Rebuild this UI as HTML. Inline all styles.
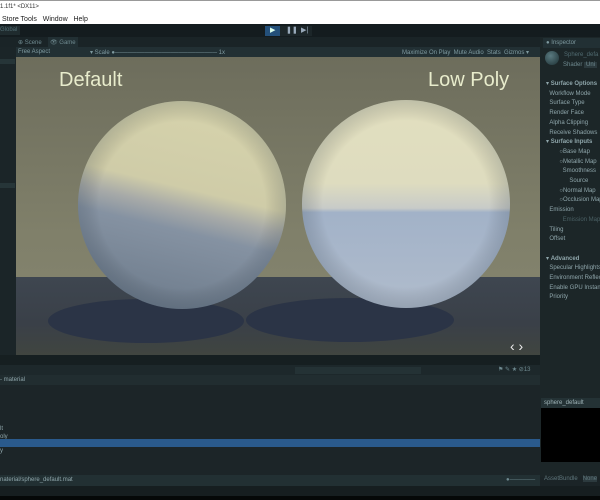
<!DOCTYPE html>
<html><head><meta charset="utf-8"><style>
*{margin:0;padding:0;box-sizing:border-box}
body{width:600px;height:500px;overflow:hidden;background:#1b2427;font-family:"Liberation Sans",sans-serif;position:relative;font-size:6px;color:#9fb0b4}
.a{position:absolute}
.t{position:absolute;white-space:nowrap}
</style></head><body>
<div class="a" style="left:0;top:0;width:600px;height:24px;background:#fff"></div>
<div class="a" style="left:0;top:0;width:600px;height:1px;background:#999"></div>
<div class="t" style="left:0;top:4px;color:#333;font-size:6px">1.1f1* &lt;DX11&gt;</div>
<div class="t" style="left:2px;top:16px;color:#222;font-size:7px">Store Tools&nbsp;&nbsp; Window&nbsp;&nbsp; Help</div>
<div class="a" style="left:0;top:24px;width:600px;height:13px;background:#141c1f"></div>
<div class="a" style="left:0;top:26px;width:20px;height:9px;background:#1f2b2e"></div>
<div class="t" style="left:0;top:27px;color:#4f6a70">Global</div>
<div class="a" style="left:265px;top:26px;width:15px;height:10px;background:#24507a"></div>
<div class="a" style="left:280px;top:26px;width:32px;height:10px;background:#1c2629"></div>
<div class="t" style="left:270px;top:26px;color:#dfe;font-size:7px">▶</div>
<div class="t" style="left:286px;top:26px;color:#9ab;font-size:7px">❚❚</div>
<div class="t" style="left:301px;top:26px;color:#9ab;font-size:7px">▶|</div>
<div class="a" style="left:0;top:37px;width:540px;height:10px;background:#1a2427"></div>
<div class="t" style="left:18px;top:39px;color:#6f8a90">⊕ Scene</div>
<div class="a" style="left:48px;top:37px;width:30px;height:10px;background:#223034"></div>
<div class="t" style="left:50px;top:39px;color:#6f8a90">👁 Game</div>
<div class="a" style="left:16px;top:47px;width:524px;height:10px;background:#223034"></div>
<div class="t" style="left:18px;top:49px;color:#7f9aa0">Free Aspect</div>
<div class="t" style="left:90px;top:49px;color:#7f9aa0">▾ Scale ●──────────────────────── 1x</div>
<div class="t" style="left:402px;top:49px;color:#7f9aa0">Maximize On Play&nbsp; Mute Audio&nbsp; Stats&nbsp; Gizmos ▾</div>
<div class="a" style="left:0;top:47px;width:16px;height:308px;background:#1b2528"></div>
<div class="a" style="left:0;top:59px;width:15px;height:5px;background:#263538"></div>
<div class="a" style="left:0;top:183px;width:15px;height:5px;background:#263538"></div>
<div class="a" style="left:16px;top:57px;width:524px;height:298px;overflow:hidden;background:linear-gradient(#6d6d5c,#80806a 60%,#858570)">
<div class="a" style="left:0;top:220px;width:524px;height:78px;background:linear-gradient(#3e4650,#3a4048 60%,#404540)"></div>
<svg class="a" style="left:0;top:0" width="524" height="298">
<defs>
<linearGradient id="g1" x1="0.62" y1="0" x2="0.38" y2="1"><stop offset="0" stop-color="#d6d3ac"/><stop offset="0.42" stop-color="#cfcca8"/><stop offset="0.52" stop-color="#a7aaa8"/><stop offset="0.62" stop-color="#8592a2"/><stop offset="1" stop-color="#6e7c8c"/></linearGradient>
<radialGradient id="e1" cx="0.5" cy="0.5" r="0.5"><stop offset="0.8" stop-color="#000" stop-opacity="0"/><stop offset="1" stop-color="#203040" stop-opacity="0.18"/></radialGradient>
<linearGradient id="g2" x1="0" y1="0" x2="0" y2="1"><stop offset="0" stop-color="#e2dfbf"/><stop offset="0.4" stop-color="#dedcbf"/><stop offset="0.52" stop-color="#c8cbc8"/><stop offset="0.54" stop-color="#a2b2c8"/><stop offset="1" stop-color="#b0bccc"/></linearGradient>
</defs>
<ellipse cx="130" cy="264" rx="98" ry="22" fill="#2b3446"/>
<ellipse cx="334" cy="263" rx="104" ry="22" fill="#2b3446"/>
<circle cx="166" cy="148" r="104" fill="url(#g1)"/>
<circle cx="166" cy="148" r="104" fill="url(#e1)"/>
<circle cx="390" cy="147" r="104" fill="url(#g2)"/>
<circle cx="390" cy="147" r="104" fill="url(#e1)"/>
<text x="43" y="29" font-family="Liberation Sans" font-size="20" fill="#e8eccc">Default</text>
<text x="412" y="29" font-family="Liberation Sans" font-size="20" fill="#e8eccc">Low Poly</text>
<text x="494" y="294" font-family="Liberation Sans" font-size="14" fill="#eee">‹ ›</text>
</svg>
</div>
<div class="a" style="left:540px;top:37px;width:60px;height:440px;background:#1c2628"></div>
<div class="a" style="left:543px;top:38px;width:57px;height:10px;background:#223034"></div>
<div class="t" style="left:546px;top:40px;color:#7f9aa0">● Inspector</div>
<div class="a" style="left:545px;top:51px;width:14px;height:14px;border-radius:50%;background:radial-gradient(circle at 40% 35%,#5a7a80,#1d3034)"></div>
<div class="t" style="left:564px;top:52px;color:#506a70">Sphere_defa</div>
<div class="t" style="left:563px;top:62px;color:#6f8a90">Shader <span style="background:#2c3a3e;padding:0 2px">Uni</span></div>
<div class="t" style="left:546px;top:80px;color:#8fa6ab;line-height:9.7px">▾ <b>Surface Options</b><br>&nbsp;&nbsp;Workflow Mode<br>&nbsp;&nbsp;Surface Type<br>&nbsp;&nbsp;Render Face<br>&nbsp;&nbsp;Alpha Clipping<br>&nbsp;&nbsp;Receive Shadows<br>▾ <b>Surface Inputs</b><br>&nbsp;&nbsp;&nbsp;&nbsp;&nbsp;&nbsp;&nbsp;&nbsp;○Base Map<br>&nbsp;&nbsp;&nbsp;&nbsp;&nbsp;&nbsp;&nbsp;&nbsp;○Metallic Map<br>&nbsp;&nbsp;&nbsp;&nbsp;&nbsp;&nbsp;&nbsp;&nbsp;&nbsp;&nbsp;Smoothness<br>&nbsp;&nbsp;&nbsp;&nbsp;&nbsp;&nbsp;&nbsp;&nbsp;&nbsp;&nbsp;&nbsp;&nbsp;&nbsp;&nbsp;Source<br>&nbsp;&nbsp;&nbsp;&nbsp;&nbsp;&nbsp;&nbsp;&nbsp;○Normal Map<br>&nbsp;&nbsp;&nbsp;&nbsp;&nbsp;&nbsp;&nbsp;&nbsp;○Occlusion Map<br>&nbsp;&nbsp;Emission<br><span style="color:#4a6064">&nbsp;&nbsp;&nbsp;&nbsp;&nbsp;&nbsp;&nbsp;&nbsp;&nbsp;&nbsp;Emission Map</span><br>&nbsp;&nbsp;Tiling<br>&nbsp;&nbsp;Offset<br><br>▾ <b>Advanced</b><br>&nbsp;&nbsp;Specular Highlights<br>&nbsp;&nbsp;Environment Reflections<br>&nbsp;&nbsp;Enable GPU Instancing<br>&nbsp;&nbsp;Priority</div>
<div class="a" style="left:541px;top:398px;width:59px;height:10px;background:#243235"></div>
<div class="t" style="left:544px;top:400px;color:#9fb4b8">sphere_default</div>
<div class="a" style="left:541px;top:408px;width:59px;height:54px;background:#000"></div>
<div class="t" style="left:544px;top:476px;color:#5f777c">AssetBundle&nbsp;&nbsp; <span style="background:#2c3a3e">None</span></div>
<div class="a" style="left:0;top:355px;width:540px;height:10px;background:#161f21"></div>
<div class="a" style="left:0;top:365px;width:540px;height:10px;background:#1d282b"></div>
<div class="a" style="left:295px;top:367px;width:126px;height:7px;background:#243235"></div>
<div class="t" style="left:498px;top:366px;color:#6f8a90">⚑ ✎ ★ ⊘13</div>
<div class="a" style="left:0;top:375px;width:540px;height:10px;background:#212d30"></div>
<div class="t" style="left:0;top:377px;color:#8fa6ab">- material</div>
<div class="a" style="left:0;top:385px;width:540px;height:90px;background:#1c2528"></div>
<div class="t" style="left:0;top:425px;color:#8fa6ab;line-height:8px">lt<br>oly</div>
<div class="a" style="left:0;top:439px;width:540px;height:8px;background:#2a5a8c"></div>
<div class="t" style="left:0;top:448px;color:#8fa6ab">y</div>
<div class="a" style="left:0;top:475px;width:540px;height:11px;background:#223033"></div>
<div class="t" style="left:0;top:477px;color:#8fa6ab">naterial/sphere_default.mat</div>
<div class="t" style="left:506px;top:477px;color:#6f8a90">●──────</div>
<div class="a" style="left:0;top:486px;width:600px;height:10px;background:#161e20"></div>
<div class="a" style="left:0;top:496px;width:600px;height:4px;background:#050808"></div>
</body></html>
